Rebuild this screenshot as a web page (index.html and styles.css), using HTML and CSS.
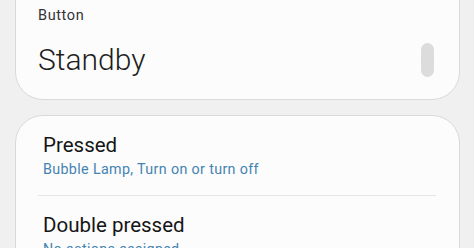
FILE: index.html
```html
<!DOCTYPE html>
<html>
<head>
    <title>Button</title>
    <link rel="stylesheet" href="styles.css">
</head>
<body>
    <div class="card head">
        <div class="label">Button</div>
        <div class="row">
            <span class="value">Standby</span>
            <span class="thumb"></span>
        </div>
    </div>
    <div class="card list">
        <div class="item">
            <div class="title">Pressed</div>
            <div class="sub">Bubble Lamp, Turn on or turn off</div>
        </div>
        <div class="item">
            <div class="title">Double pressed</div>
            <div class="sub">No actions assigned</div>
        </div>
    </div>
</body>
</html>
```

FILE: styles.css
```css
html, body {
    margin: 0;
    height: 100%;
    overflow: hidden;
}

body {
    background-color: #f0f0f0;
    font-family: Roboto, "Liberation Sans", sans-serif;
    padding: 0 14px 0 15px;
}

.card {
    background-color: #fcfcfc;
    border: 1px solid #d9d9d9;
    border-radius: 28px;
}

.head {
    margin-top: -40px;
    padding: 47px 25px 21px 22px;
}

.label {
    font-size: 14.5px;
    line-height: 16px;
    letter-spacing: 0.6px;
    color: #333333;
}

.row {
    display: flex;
    align-items: center;
    justify-content: space-between;
    margin-top: 18px;
}

.value {
    font-size: 30px;
    font-weight: 300;
    line-height: 36px;
    color: #1e1e1e;
}

.thumb {
    width: 13px;
    height: 34px;
    border-radius: 7px;
    background-color: #dcdcdc;
}

.list {
    margin-top: 15px;
    padding: 0 23px 0 22px;
}

.item {
    padding: 16.5px 0 17.5px 5px;
    border-bottom: 1px solid #e6e6e6;
}

.title {
    font-size: 20.5px;
    line-height: 24px;
    color: #151515;
}

.sub {
    margin-top: 3px;
    font-size: 14.3px;
    line-height: 18px;
    letter-spacing: 0.35px;
    color: #4483b2;
}
```
